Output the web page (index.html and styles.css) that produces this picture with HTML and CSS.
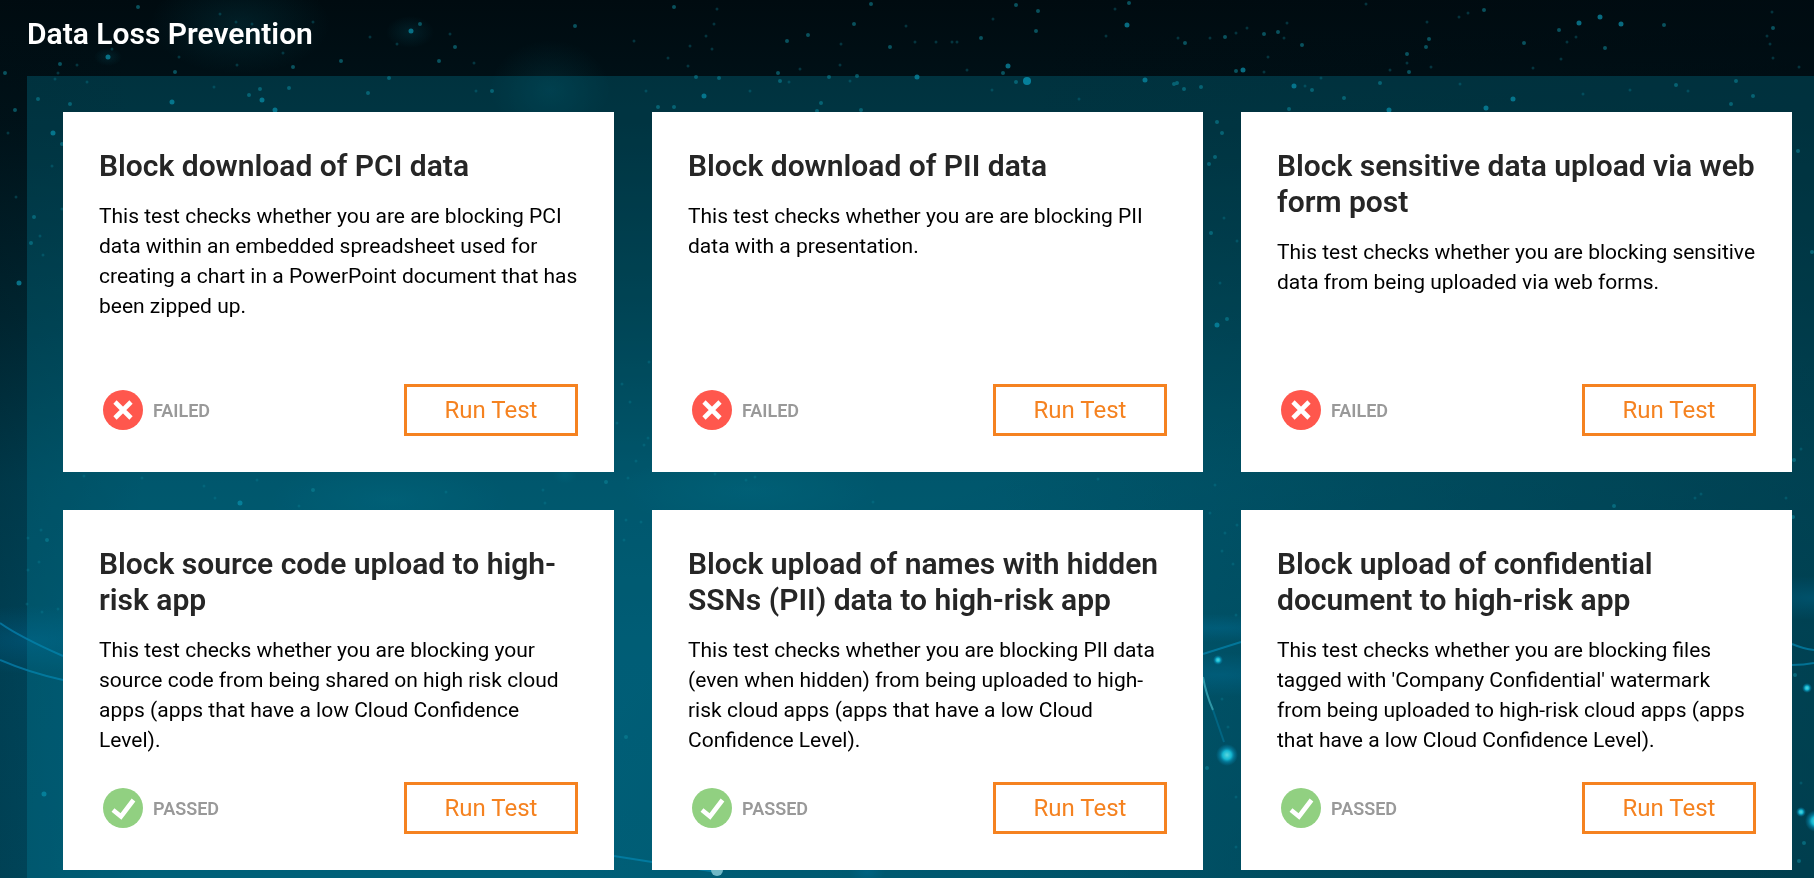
FILE: index.html
```html
<!DOCTYPE html>
<html lang="en">
<head>
    <meta charset="utf-8">
    <title>Data Loss Prevention</title>
    <link rel="stylesheet" href="styles.css">
</head>
<body>
    <!-- night sky background -->
    <svg class="sky" viewBox="0 0 1814 878" preserveAspectRatio="xMinYMin slice" aria-hidden="true">
        <defs>
            <radialGradient id="orb">
                <stop offset="0" stop-color="#7cf4f4"/>
                <stop offset="0.4" stop-color="#1cc8e0"/>
                <stop offset="0.65" stop-color="#0a90b8" stop-opacity="0.6"/>
                <stop offset="1" stop-color="#0678a4" stop-opacity="0"/>
            </radialGradient>
            <radialGradient id="haze">
                <stop offset="0" stop-color="#0a90a8" stop-opacity="0.14"/>
                <stop offset="1" stop-color="#0a90a8" stop-opacity="0"/>
            </radialGradient>
            <radialGradient id="blue">
                <stop offset="0" stop-color="#0078b4" stop-opacity="0.26"/>
                <stop offset="1" stop-color="#0078b4" stop-opacity="0"/>
            </radialGradient>
        </defs>
        <ellipse cx="240" cy="24" rx="90" ry="50" fill="url(#haze)"/>
        <ellipse cx="410" cy="32" rx="24" ry="16" fill="url(#haze)"/>
        <ellipse cx="108" cy="57" rx="14" ry="9" fill="url(#haze)"/>
        <ellipse cx="550" cy="90" rx="60" ry="50" fill="url(#haze)"/>
        <ellipse cx="565" cy="475" rx="12" ry="9" fill="url(#haze)"/>
        <ellipse cx="390" cy="500" rx="120" ry="40" fill="url(#haze)"/>
        <ellipse cx="750" cy="490" rx="130" ry="40" fill="url(#haze)"/>
        <ellipse cx="1218" cy="628" rx="110" ry="14" fill="url(#blue)"/>
        <ellipse cx="1220" cy="675" rx="110" ry="22" fill="url(#blue)"/>
        <ellipse cx="1814" cy="598" rx="90" ry="22" fill="url(#blue)"/>
        <ellipse cx="30" cy="640" rx="120" ry="34" fill="url(#blue)"/>
        <ellipse cx="867" cy="872" rx="18" ry="12" fill="url(#blue)"/>

        <path class="star faint" d="M220 14h0M236 22h0M252 24h0M313 22h0M450 34h0M283 53h0M237 65h0M77 65h0M58 73h0M55 79h0M87 82h0M179 57h0M112 49h0M474 63h0M370 37h0M397 44h0M214 87h0M476 91h0M52 166h0M8 133h0M16 197h0M40 236h0M62 209h0M43 255h0M717 9h0M706 36h0M714 24h0M712 49h0M690 46h0M841 44h0M906 26h0M993 19h0M1115 9h0M1178 38h0M967 70h0M936 42h0M952 42h0M957 42h0M915 42h0M840 65h0M688 66h0M800 69h0M634 41h0M668 58h0M1106 36h0M1210 38h0M789 82h0M850 81h0M992 90h0M1079 99h0M750 91h0M646 91h0M1247 28h0M1236 33h0M1264 72h0M1268 57h0M1287 23h0M1284 38h0M1427 22h0M1431 67h0M1459 17h0M1468 13h0M1366 4h0M1407 63h0M1390 70h0M1533 68h0M1561 59h0M1576 37h0M1567 42h0M1767 36h0M1770 44h0M1773 58h0M1772 12h0M1799 67h0M1305 86h0M1321 78h0M1460 84h0M1583 94h0M1630 90h0M1688 91h0M1237 241h0M1220 283h0M1224 218h0M142 478h0M204 486h0M215 498h0M257 480h0M299 506h0M84 476h0M446 492h0M543 490h0M545 503h0M630 402h0M622 384h0M649 362h0M617 423h0M648 438h0M644 445h0M636 461h0M628 478h0M626 520h0M641 522h0M624 540h0M715 474h0M746 480h0M755 477h0M873 502h0M1098 479h0M1215 485h0M1210 513h0M1237 525h0M1225 533h0M1222 551h0M1233 564h0M1236 615h0M1222 699h0M1228 727h0M1236 797h0M1236 847h0M41 530h0M28 538h0M39 562h0M28 570h0M27 604h0M42 612h0M58 609h0M1701 494h0M1786 498h0M1801 449h0M1801 783h0M1695 498h0"/>
        <path class="star" d="M138 7h0M420 24h0M455 47h0M439 61h0M341 61h0M293 67h0M60 64h0M5 73h0M175 72h0M575 26h0M38 99h0M70 104h0M260 89h0M249 95h0M289 88h0M389 78h0M368 93h0M492 91h0M15 110h0M62 144h0M34 217h0M31 243h0M674 7h0M871 4h0M854 24h0M787 41h0M808 35h0M890 47h0M981 38h0M1016 5h0M1038 11h0M1036 31h0M1129 3h0M1185 43h0M1003 73h0M778 73h0M696 77h0M719 78h0M780 81h0M829 77h0M857 76h0M674 107h0M658 107h0M821 103h0M817 111h0M861 110h0M1016 82h0M1174 84h0M1177 83h0M1184 89h0M1201 87h0M1225 37h0M1264 34h0M1278 32h0M1302 45h0M1236 71h0M1409 72h0M1407 54h0M1429 39h0M1426 47h0M1484 10h0M1524 43h0M1559 30h0M1605 48h0M1664 25h0M1773 28h0M1312 90h0M1380 83h0M1344 98h0M1289 109h0M1676 85h0M1736 81h0M1753 96h0M1731 104h0M1217 122h0M1222 133h0M1215 157h0M1209 164h0M1211 233h0M1227 319h0M1798 151h0M1812 252h0M313 490h0M606 482h0M1794 460h0M1614 506h0M1793 517h0M626 737h0M47 540h0M1207 768h0M1795 675h0M1804 843h0M1799 861h0"/>
        <path class="star big" d="M108 57h0M411 31h0M172 102h0M262 100h0M275 110h0M53 133h0M19 283h0M704 96h0M917 77h0M1008 66h0M1127 25h0M1145 80h0M1243 70h0M1294 86h0M1389 110h0M1513 99h0M1486 108h0M1579 23h0M1600 17h0M1621 24h0M240 503h0M44 794h0M1217 325h0"/>
        <circle class="giant" cx="1027" cy="81" r="4"/>

        <path class="trail" d="M0 623Q20 637 63 656M0 660Q30 673 63 680M1203 654L1241 642M1792 644Q1804 649 1814 650M1792 665Q1804 665 1814 663M614 856L652 862L717 872"/>
        <path class="trail pale" d="M1203 677Q1206 694 1213 710"/>
        <path class="trail dim" d="M1213 710L1224 742"/>
        <circle cx="1218" cy="660" r="5" fill="url(#orb)"/>
        <circle cx="1227" cy="755" r="11" fill="url(#orb)"/>
        <circle cx="1807" cy="688" r="5" fill="url(#orb)"/>
        <circle cx="1801" cy="812" r="5" fill="url(#orb)"/>
        <circle cx="1816" cy="821" r="11" fill="url(#orb)"/>
        <circle class="pearl" cx="717" cy="870" r="6"/>
    </svg>

    <!-- status icons -->
    <svg class="icon-defs" aria-hidden="true">
        <symbol id="icon-failed" viewBox="0 0 40 40">
            <circle cx="20" cy="20" r="20" fill="#ff574d"/>
            <path d="M12 12L28 28M28 12L12 28" fill="none" stroke="#fff" stroke-width="4.6"/>
        </symbol>
        <symbol id="icon-passed" viewBox="0 0 40 40">
            <circle cx="20" cy="20" r="20" fill="#91d081"/>
            <path d="M10 22L18 28.5L30.5 12" fill="none" stroke="#fff" stroke-width="4.6"/>
        </symbol>
    </svg>

    <h1 class="page-title">Data Loss Prevention</h1>

    <main class="panel">
        <section class="card">
            <h2 class="card-title">Block download of PCI data</h2>
            <p class="card-text">This test checks whether you are are blocking PCI data within an embedded spreadsheet used for creating a chart in a PowerPoint document that has been zipped up.</p>
            <div class="card-footer">
                <span class="status"><svg class="status-icon" aria-hidden="true"><use href="#icon-failed"/></svg>FAILED</span>
                <button class="run-btn" type="button">Run Test</button>
            </div>
        </section>

        <section class="card">
            <h2 class="card-title">Block download of PII data</h2>
            <p class="card-text">This test checks whether you are are blocking PII data with a presentation.</p>
            <div class="card-footer">
                <span class="status"><svg class="status-icon" aria-hidden="true"><use href="#icon-failed"/></svg>FAILED</span>
                <button class="run-btn" type="button">Run Test</button>
            </div>
        </section>

        <section class="card">
            <h2 class="card-title">Block sensitive data upload via web form post</h2>
            <p class="card-text">This test checks whether you are blocking sensitive data from being uploaded via web forms.</p>
            <div class="card-footer">
                <span class="status"><svg class="status-icon" aria-hidden="true"><use href="#icon-failed"/></svg>FAILED</span>
                <button class="run-btn" type="button">Run Test</button>
            </div>
        </section>

        <section class="card">
            <h2 class="card-title">Block source code upload to high-risk app</h2>
            <p class="card-text">This test checks whether you are blocking your source code from being shared on high risk cloud apps (apps that have a low Cloud Confidence Level).</p>
            <div class="card-footer">
                <span class="status"><svg class="status-icon" aria-hidden="true"><use href="#icon-passed"/></svg>PASSED</span>
                <button class="run-btn" type="button">Run Test</button>
            </div>
        </section>

        <section class="card">
            <h2 class="card-title">Block upload of names with hidden SSNs (PII) data to high-risk app</h2>
            <p class="card-text">This test checks whether you are blocking PII data (even when hidden) from being uploaded to high-risk cloud apps (apps that have a low Cloud Confidence Level).</p>
            <div class="card-footer">
                <span class="status"><svg class="status-icon" aria-hidden="true"><use href="#icon-passed"/></svg>PASSED</span>
                <button class="run-btn" type="button">Run Test</button>
            </div>
        </section>

        <section class="card">
            <h2 class="card-title">Block upload of confidential document to high-risk app</h2>
            <p class="card-text">This test checks whether you are blocking files tagged with 'Company Confidential' watermark from being uploaded to high-risk cloud apps (apps that have a low Cloud Confidence Level).</p>
            <div class="card-footer">
                <span class="status"><svg class="status-icon" aria-hidden="true"><use href="#icon-passed"/></svg>PASSED</span>
                <button class="run-btn" type="button">Run Test</button>
            </div>
        </section>
    </main>
</body>
</html>
```
FILE: styles.css
```css
* {
    box-sizing: border-box;
}

body {
    display: flex;
    flex-direction: column;
    min-height: 100vh;
    margin: 0;
    font-family: Roboto, "Liberation Sans", sans-serif;
    background-color: #000e14;
}

/* background */
.sky {
    position: fixed;
    top: 0;
    left: 0;
    z-index: -1;
    width: 100%;
    height: 100%;
    background:
        radial-gradient(ellipse 70% 60% at 100% 100%, rgba(0, 24, 32, 0.6), rgba(0, 24, 32, 0)),
        linear-gradient(90deg, rgba(0, 12, 18, 0.2), rgba(0, 12, 18, 0) 8%, rgba(0, 12, 18, 0) 55%, rgba(0, 12, 18, 0.5)),
        linear-gradient(180deg, #000b10 0%, #00131a 14%, #002a36 36%, #004356 55%, #004c63 75%, #004f66 100%);
}

.star {
    fill: none;
    stroke: #0f7f90;
    stroke-width: 4;
    stroke-linecap: round;
    opacity: 0.6;
}

.star.faint {
    stroke-width: 3;
    opacity: 0.35;
}

.star.big {
    stroke: #0c93ae;
    stroke-width: 5;
    opacity: 0.7;
}

.giant {
    fill: #087c96;
}

.pearl {
    fill: #9cc9d2;
}

.trail {
    fill: none;
    stroke: #0684b4;
    stroke-width: 2;
    opacity: 0.7;
}

.trail.pale {
    stroke: #5cc4cc;
}

.trail.dim {
    opacity: 0.4;
}

.icon-defs {
    position: absolute;
    width: 0;
    height: 0;
}

.page-title {
    margin: 0;
    padding: 16px 27px 24px;
    color: #fff;
    font-size: 30px;
    font-weight: 600;
    line-height: 36px;
}

.panel {
    flex: 1;
    display: grid;
    grid-template-columns: repeat(3, 1fr);
    grid-auto-rows: 1fr;
    gap: 38px;
    margin-left: 27px;
    padding: 36px 22px 8px 36px;
    background-color: rgba(0, 140, 170, 0.28);
}

.card {
    display: flex;
    flex-direction: column;
    padding: 36px;
    background-color: #fff;
}

.card-title {
    margin: 0 0 17px;
    color: #262626;
    font-size: 30px;
    font-weight: 600;
    line-height: 36px;
}

.card-text {
    margin: 0 0 27px;
    color: #000;
    font-size: 21px;
    line-height: 30px;
}

.card-footer {
    display: flex;
    align-items: center;
    justify-content: space-between;
    margin-top: auto;
}

.status {
    display: flex;
    align-items: center;
    gap: 10px;
    padding-left: 4px;
    color: #999;
    font-size: 18px;
    font-weight: 600;
}

.status-icon {
    width: 40px;
    height: 40px;
}

.run-btn {
    width: 174px;
    height: 52px;
    padding: 0;
    border: 3px solid #f58220;
    background-color: #fff;
    color: #f58220;
    font-family: inherit;
    font-size: 24px;
    cursor: pointer;
}
```
